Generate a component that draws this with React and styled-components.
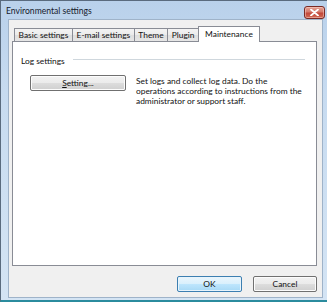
import React from "react";
import styled, { createGlobalStyle } from "styled-components";

const Global = createGlobalStyle`
  html, body { margin: 0; padding: 0; background: #ffffff; }
  body { font-family: "Lato", "Noto Sans", sans-serif; }
  * { box-sizing: border-box; }
`;

const Window = styled.div`
  width: 327px;
  height: 302px;
  display: flex;
  flex-direction: column;
  border: 1px solid #5a6b7e;
  border-bottom: 2px solid #2b8c9e;
  border-right: none;
  background: linear-gradient(180deg, #b9d1eb 0%, #c7dbf0 30%, #d4e4f4 100%);
  font-family: "Lato", "Noto Sans", sans-serif;
  font-size: 8.4px;
  color: #111111;
`;

const TitleBar = styled.div`
  height: 18px;
  display: flex;
  align-items: center;
  justify-content: space-between;
  padding: 0 2px 0 5px;
`;

const Title = styled.span`
  font-size: 8.6px;
  color: #16202c;
  padding-top: 1px;
`;

const CloseButton = styled.div`
  width: 21px;
  height: 13px;
  margin-top: 4px;
  border: 1px solid #7a2a25;
  border-radius: 3px;
  background: linear-gradient(180deg, #e4a295 0%, #d47a6c 45%, #c2483b 55%, #d06a55 100%);
  display: flex;
  align-items: center;
  justify-content: center;
  box-shadow: inset 0 0 0 1px rgba(255, 220, 210, 0.45);
`;

const Client = styled.div`
  flex: 1;
  margin: 0 4px 2px 7px;
  background: #f0f0f0;
  border: 1px solid #9fb3c9;
  display: flex;
  flex-direction: column;
  padding: 6px 5px 4px 3px;
`;

const TabStrip = styled.div`
  display: flex;
  align-items: flex-end;
  height: 16px;
  padding-left: 2px;
  position: relative;
  z-index: 1;
  margin-bottom: -1px;
`;

const Tab = styled.div`
  height: ${(p) => (p.$active ? "16px" : "14px")};
  padding: 0 ${(p) => (p.$active ? "6px" : "3.6px")};
  margin: 0 ${(p) => (p.$active ? "-2px" : "0")};
  margin-left: ${(p) => (p.$active ? "-1px" : p.$first ? "0" : "-1px")};
  border: 1px solid #898c95;
  border-bottom: ${(p) => (p.$active ? "none" : "1px solid #898c95")};
  background: ${(p) =>
    p.$active ? "#ffffff" : "linear-gradient(180deg, #f3f3f3 0%, #ebebeb 50%, #dedede 51%, #e6e6e6 100%)"};
  display: flex;
  align-items: ${(p) => (p.$active ? "flex-start" : "center")};
  padding-top: ${(p) => (p.$active ? "2px" : "0")};
  white-space: nowrap;
  position: relative;
  z-index: ${(p) => (p.$active ? 2 : 1)};
`;

const Panel = styled.div`
  height: 225px;
  background: #ffffff;
  border: 1px solid #898c95;
  padding: 12px 11px 0 8px;
`;

const GroupHeader = styled.div`
  display: flex;
  align-items: center;
  gap: 8px;
  height: 13px;
`;

const GroupLine = styled.div`
  flex: 1;
  height: 1px;
  background: #cfd7dd;
  margin-top: -2px;
`;

const SettingRow = styled.div`
  display: flex;
  align-items: flex-start;
  margin-top: 8px;
  padding-left: 9px;
  gap: 10px;
`;

const Button = styled.button`
  font-family: inherit;
  font-size: 8.4px;
  color: #111111;
  width: ${(p) => p.$w}px;
  height: 16px;
  padding: 0;
  border: 1px solid ${(p) => (p.$default ? "#3c7fb1" : "#707070")};
  border-radius: 2px;
  background: ${(p) =>
    p.$default
      ? "linear-gradient(180deg, #eaf6fd 0%, #d9f0fc 50%, #bee6fd 51%, #a7d9f5 100%)"
      : "linear-gradient(180deg, #f2f2f2 0%, #ebebeb 50%, #dddddd 51%, #cfcfcf 100%)"};
  box-shadow: inset 0 0 0 1px ${(p) => (p.$default ? "#e8f4fc" : "#fcfcfc")};
  display: flex;
  align-items: center;
  justify-content: center;
  line-height: 1;
`;

const Mnemonic = styled.span`
  text-decoration: underline;
  text-underline-offset: 1px;
`;

const Description = styled.p`
  margin: 2px 0 0;
  line-height: 9.8px;
  white-space: nowrap;
`;

const Footer = styled.div`
  display: flex;
  justify-content: flex-end;
  gap: 11px;
  margin-top: 10px;
`;

const XIcon = () => (
  <svg width="9" height="7" viewBox="0 0 9 7">
    <path d="M1 0.5 L8 6.5 M8 0.5 L1 6.5" stroke="#ffffff" strokeWidth="1.8" strokeLinecap="round" />
  </svg>
);

export default function App() {
  const tabs = ["Basic settings", "E-mail settings", "Theme", "Plugin", "Maintenance"];
  return (
    <>
      <Global />
      <Window>
        <TitleBar>
          <Title>Environmental settings</Title>
          <CloseButton>
            <XIcon />
          </CloseButton>
        </TitleBar>
        <Client>
          <TabStrip>
            {tabs.map((t, i) => (
              <Tab key={t} $first={i === 0} $active={t === "Maintenance"}>
                {t}
              </Tab>
            ))}
          </TabStrip>
          <Panel>
            <GroupHeader>
              <span>Log settings</span>
              <GroupLine />
            </GroupHeader>
            <SettingRow>
              <Button $w={96}>
                <span>
                  <Mnemonic>S</Mnemonic>etting...
                </span>
              </Button>
              <Description>
                Set logs and collect log data. Do the
                <br />
                operations according to instructions from the
                <br />
                administrator or support staff.
              </Description>
            </SettingRow>
          </Panel>
          <Footer>
            <Button $w={65} $default>
              OK
            </Button>
            <Button $w={64}>Cancel</Button>
          </Footer>
        </Client>
      </Window>
    </>
  );
}
